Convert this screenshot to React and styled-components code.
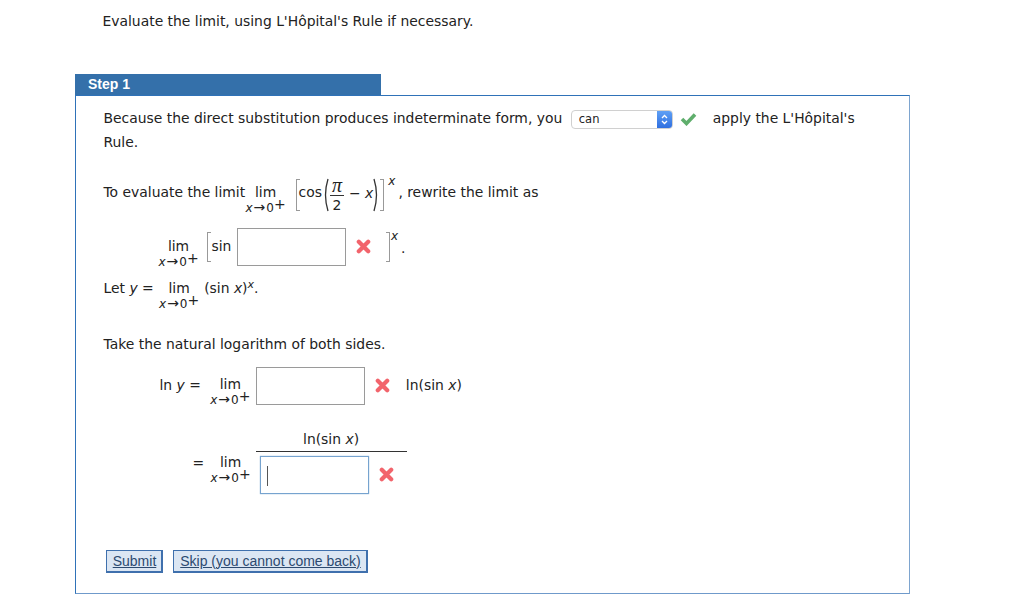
import React from 'react';
import styled, { createGlobalStyle } from 'styled-components';

const Global = createGlobalStyle`
  html, body { margin: 0; padding: 0; background: #fff; }
  body { font-family: "DejaVu Sans", Verdana, sans-serif; font-size: 13.9px; color: #222; }
`;
const Page = styled.div`
  width: 1024px; height: 609px; overflow: hidden; box-sizing: border-box;
  padding: 11px 0 0 75px;
`;
const Question = styled.div`
  line-height: 20px; padding-left: 27.5px; height: 63px;
`;
const Tab = styled.div`
  width: 306px; height: 21px; box-sizing: border-box; background: #3470aa; color: #fff;
  font: bold 14px/21px "Liberation Sans", Arial, sans-serif; padding-left: 13px;
`;
const Panel = styled.div`
  width: 835px; height: 499px; box-sizing: border-box;
  border: 1px solid #2f72b8; border-right-color: #7ea5cf; border-bottom-color: #6f9acb;
  padding: 0 0 0 27.5px;
`;
const Row = styled.div`
  display: flex; align-items: flex-start; height: ${p => p.$h}px; margin-top: ${p => p.$mt || 0}px;
  margin-left: ${p => p.$indent || 0}px;
`;
const Text = styled.span`
  display: block; line-height: 20px; white-space: pre; margin-top: ${p => p.$top || 0}px; margin-left: ${p => p.$left || 0}px;
`;
const SupX = styled(Text)`font-size: 12px; font-style: italic;`;
const I = styled.i`font-style: italic;`;
const Sup = styled.sup`font-size: 11px; font-style: italic; line-height: 0; vertical-align: 5px;`;
const Lim = styled.span`
  display: flex; flex-direction: column; align-items: center; width: 44px; flex: none;
  margin-top: ${p => p.$top || 0}px; margin-left: ${p => p.$left || 0}px; line-height: 20px;
`;
const Under = styled.span`
  font-size: 12px; line-height: 10px; white-space: pre;
`;
const Arrow = styled.span`font-size: 14px; margin: 0 1px;`;
const Plus = styled.span`font-size: 14px; position: relative; top: -3px;`;
const Bracket = styled.span`
  flex: none; display: block; width: 4px; height: ${p => p.$h}px; box-sizing: border-box;
  border: 1px solid #999; border-${p => p.$right ? 'left' : 'right'}: none;
  margin-top: ${p => p.$top || 0}px; margin-left: ${p => p.$left || 0}px;
`;
const Box = styled.div`
  flex: none; width: 109px; height: 38px; box-sizing: border-box; background: #fff;
  border: 1px solid ${p => p.$focus ? '#76a3cf' : '#9a9a9a'};
  margin-left: ${p => p.$left || 0}px; margin-top: ${p => p.$top || 0}px;
  ${p => p.$focus ? 'box-shadow: 0 0 1px #76a3cf;' : ''}
  padding: 9px 0 0 6px;
`;
const Caret = styled.div`width: 1px; height: 20px; background: #555;`;
const Select = styled.div`
  flex: none; width: 102px; height: 19px; box-sizing: border-box; border: 1px solid #d0d0d0; border-radius: 4px;
  display: flex; justify-content: space-between; margin: 2px 0 0 8.5px; background: #fff;
  font-size: 11.5px; line-height: 17px; padding-left: 7px; overflow: hidden;
`;
const SelectArrow = styled.span`
  width: 15px; background: linear-gradient(#5fa0f5, #2f6fe0);
  display: flex; align-items: center; justify-content: center;
`;
const Icon = styled.svg`
  flex: none; display: block; margin-left: ${p => p.$left || 0}px; margin-top: ${p => p.$top || 0}px;
`;
const Frac = styled.span`
  display: flex; flex-direction: column; align-items: center; flex: none; margin: ${p => p.$top || 0}px 0 0 ${p => p.$left || 0}px; font-size: 13.9px; line-height: 15px;
`;
const FracBar = styled.span`display: block; width: 14px; height: 1px; background: #333; margin: 2px 0 2px;`;
const Pi = styled.span`font-family: "Liberation Serif", serif; font-style: italic; font-size: 20px; line-height: 15px;`;
const Block = styled.div`
  display: flex; flex-direction: column; flex: none; margin-left: ${p => p.$left || 0}px;
`;
const Numerator = styled(Text)`text-align: center; width: 151px; margin-left: -4px; margin-bottom: 2px;`;
const TopBar = styled.div`
  width: 151px; height: 1px; background: #333; margin-bottom: 4px; margin-left: -4px;
`;
const BoxLine = styled.div`display: flex; align-items: flex-start;`;
const Actions = styled.div`
  display: flex; gap: 10px; margin: 59px 0 0 2.5px;
`;
const Button = styled.button`
  height: 23px; box-sizing: border-box; padding: 0 0 0 1px; background: #dbe6f3; color: #2c4a70;
  border: 1px solid #3f70ad; border-width: 1px 2px 2px 1px; border-radius: 0;
  font: 14px/19px "Liberation Sans", Arial, sans-serif; text-decoration: underline; white-space: nowrap;
  width: ${p => p.$w}px;
`;

const Cross = ({ left, top }) => (
  <Icon $left={left} $top={top} width="15" height="15" viewBox="0 0 15 15">
    <path d="M2.8 2.8 L12.2 12.2 M12.2 2.8 L2.8 12.2" stroke="#f2646c" strokeWidth="4.2" strokeLinecap="round" />
  </Icon>
);
const LimX = ({ top, left }) => (
  <Lim $top={top} $left={left}>
    lim
    <Under><I>x</I><Arrow>→</Arrow>0<Plus>+</Plus></Under>
  </Lim>
);

export default function App() {
  return (
    <Page>
      <Global />
      <Question>Evaluate the limit, using L'Hôpital's Rule if necessary.</Question>
      <Tab>Step 1</Tab>
      <Panel>
        <Row $h={20} $mt={12}>
          <Text>Because the direct substitution produces indeterminate form, you</Text>
          <Select>can<SelectArrow>
            <svg width="9" height="13" viewBox="0 0 9 13"><path d="M2 5 L4.5 2.5 L7 5 M2 8 L4.5 10.5 L7 8" fill="none" stroke="#fff" strokeWidth="1.3" /></svg>
          </SelectArrow></Select>
          <Icon $left={7} $top={4} width="17" height="14" viewBox="0 0 17 14">
            <path d="M2 7 L6.5 11.5 L15 2.5" fill="none" stroke="#5fae6c" strokeWidth="3.6" />
          </Icon>
          <Text $left={16}>apply the L'Hôpital's</Text>
        </Row>
        <Row $h={20} $mt={4}><Text>Rule.</Text></Row>
        <Row $h={42} $mt={18}>
          <Text $top={12}>To evaluate the limit </Text>
          <LimX top={12} left={-6} />
          <Bracket $h={32} $top={9} $left={8} />
          <Text $top={12} $left={-1}>cos</Text>
          <Icon width="7" height="34" viewBox="0 0 7 34" $top={8}><path d="M6 1 Q1 17 6 33" fill="none" stroke="#333" strokeWidth="1.3" /></Icon>
          <Frac $top={8} $left={1}><Pi>π</Pi><FracBar />2</Frac>
          <Text $top={13} $left={5}>− <I>x</I></Text>
          <Icon width="7" height="34" viewBox="0 0 7 34" $top={8}><path d="M1 1 Q6 17 1 33" fill="none" stroke="#333" strokeWidth="1.3" /></Icon>
          <Bracket $right $h={32} $top={9} />
          <SupX $top={1} $left={4}>x</SupX>
          <Text $top={12} $left={3}>, rewrite the limit as</Text>
        </Row>
        <Row $h={38} $mt={16} $indent={53}>
          <LimX top={8} />
          <Bracket $h={30} $top={4} $left={6} />
          <Text $top={8} $left={1}>sin</Text>
          <Box $left={5.5} />
          <Cross left={10} top={11} />
          <Bracket $right $h={30} $top={4} $left={15} />
          <SupX $top={-2} $left={1}>x</SupX>
          <Text $top={10} $left={3}>.</Text>
        </Row>
        <Row $h={36} $mt={12}>
          <Text>Let <I>y</I> = </Text>
          <LimX left={-1} />
          <Text $left={3}>(sin <I>x</I>)<Sup>x</Sup>.</Text>
        </Row>
        <Row $h={20} $mt={20}><Text>Take the natural logarithm of both sides.</Text></Row>
        <Row $h={38} $mt={13} $indent={56}>
          <Text $top={8}>ln <I>y</I> = </Text>
          <LimX top={7} left={3} />
          <Box $left={3.5} />
          <Cross left={10} top={11} />
          <Text $top={8} $left={16}>ln(sin <I>x</I>)</Text>
        </Row>
        <Row $h={61} $mt={25} $indent={89}>
          <Text $top={23}>= </Text>
          <LimX top={22} />
          <Block $left={7}>
            <Numerator $top={-1}>ln(sin <I>x</I>)</Numerator>
            <TopBar />
            <BoxLine>
              <Box $focus><Caret /></Box>
              <Cross left={10} top={11} />
            </BoxLine>
          </Block>
        </Row>
        <Actions>
          <Button $w={57}>Submit</Button>
          <Button $w={195}>Skip (you cannot come back)</Button>
        </Actions>
      </Panel>
    </Page>
  );
}
